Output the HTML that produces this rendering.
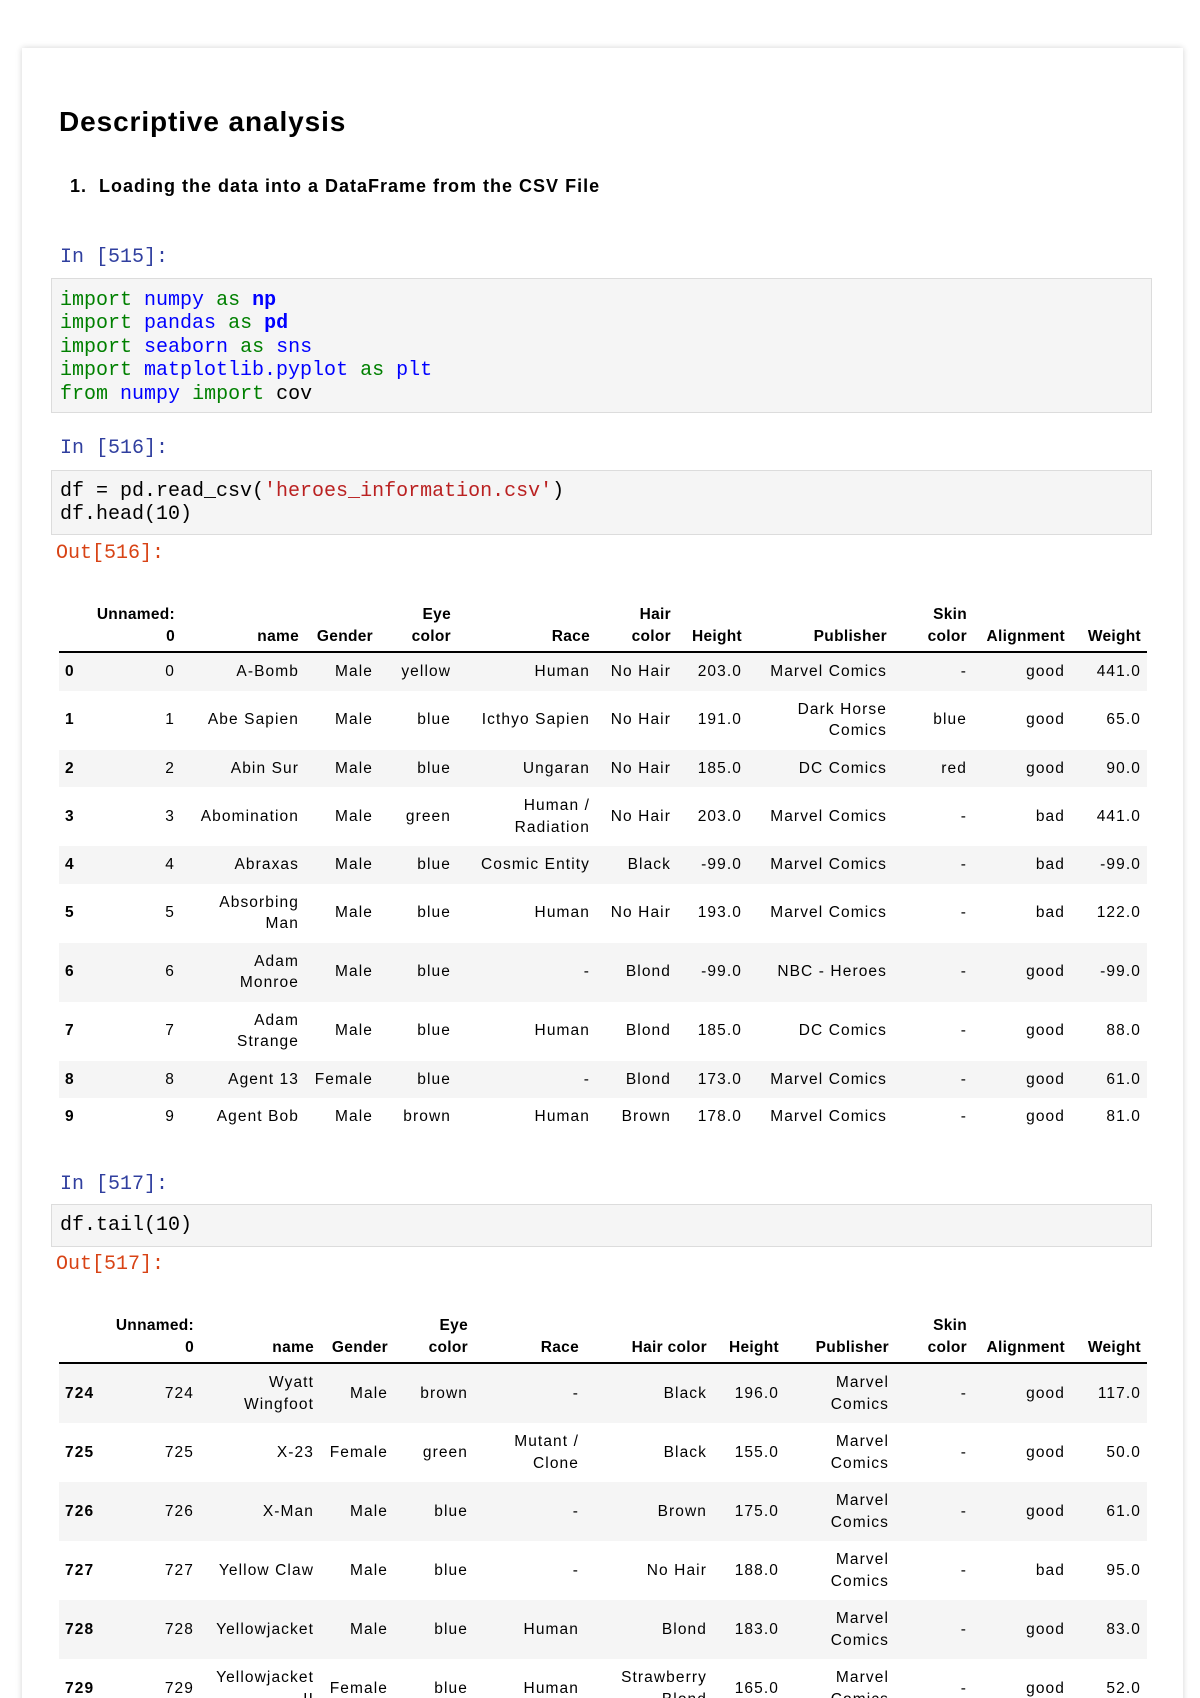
<!DOCTYPE html>
<html><head><meta charset="utf-8"><style>
html,body{margin:0;padding:0;background:#fff;width:1200px;height:1698px;overflow:hidden;}
body{position:relative;font-family:"Liberation Sans",Arial,sans-serif;color:#000;}
.card{position:absolute;left:22px;top:48px;width:1161px;height:1700px;background:#fff;box-shadow:0 0 6px rgba(0,0,0,0.18);}
.a{position:absolute;}
h1{margin:0;font-size:28px;font-weight:bold;letter-spacing:0.9px;}
.li{font-size:18px;font-weight:bold;letter-spacing:1px;}
.mono{font-family:"Liberation Mono",monospace;font-size:20px;line-height:23.4px;white-space:pre;}
.pin{color:#303f9f;}
.pout{color:#d84315;}
.box{position:absolute;left:51px;width:1101px;background:#f5f5f5;border:1px solid #dcdcdc;box-sizing:border-box;padding-left:8px;}
.k{color:#008000;}
.n{color:#0000ff;}
.b{font-weight:bold;}
.s{color:#ba2121;}
table{position:absolute;left:59px;width:1088px;border-collapse:collapse;table-layout:fixed;font-size:15.5px;line-height:21.5px;letter-spacing:1.1px;}
th,td{padding:8px 6px;text-align:right;white-space:nowrap;vertical-align:middle;overflow:visible;}
thead th{vertical-align:bottom;padding:4px 6px;border-bottom:2px solid #000;letter-spacing:0.3px;}
tbody th{text-align:left;}
tbody tr:nth-child(odd){background:#f5f5f5;}
</style></head><body>
<div class="card"></div>
<div class="a" style="left:59px;top:106px"><h1>Descriptive analysis</h1></div>
<div class="a li" style="left:70px;top:176px">1.&nbsp;&nbsp;Loading the data into a DataFrame from the CSV File</div>
<div class="a mono pin" style="left:60px;top:246px">In [515]:</div>
<div class="box mono" style="top:278px;height:135px;padding-top:10px"><span class="k">import</span> <span class="n">numpy</span> <span class="k">as</span> <span class="n b">np</span>
<span class="k">import</span> <span class="n">pandas</span> <span class="k">as</span> <span class="n b">pd</span>
<span class="k">import</span> <span class="n">seaborn</span> <span class="k">as</span> <span class="n">sns</span>
<span class="k">import</span> <span class="n">matplotlib.pyplot</span> <span class="k">as</span> <span class="n">plt</span>
<span class="k">from</span> <span class="n">numpy</span> <span class="k">import</span> cov</div>
<div class="a mono pin" style="left:60px;top:437px">In [516]:</div>
<div class="box mono" style="top:470px;height:65px;padding-top:9px">df = pd.read_csv(<span class="s">'heroes_information.csv'</span>)
df.head(10)</div>
<div class="a mono pout" style="left:56px;top:542px">Out[516]:</div>

<table style="top:600px">
<colgroup><col style="width:29px"><col style="width:93px"><col style="width:124px"><col style="width:74px"><col style="width:78px"><col style="width:139px"><col style="width:81px"><col style="width:71px"><col style="width:145px"><col style="width:80px"><col style="width:98px"><col style="width:76px"></colgroup>
<thead><tr><th></th><th>Unnamed:<br>0</th><th>name</th><th>Gender</th><th>Eye<br>color</th><th>Race</th><th>Hair<br>color</th><th>Height</th><th>Publisher</th><th>Skin<br>color</th><th>Alignment</th><th>Weight</th></tr></thead>
<tbody>
<tr><th>0</th><td>0</td><td>A-Bomb</td><td>Male</td><td>yellow</td><td>Human</td><td>No Hair</td><td>203.0</td><td>Marvel Comics</td><td>-</td><td>good</td><td>441.0</td></tr>
<tr><th>1</th><td>1</td><td>Abe Sapien</td><td>Male</td><td>blue</td><td>Icthyo Sapien</td><td>No Hair</td><td>191.0</td><td>Dark Horse<br>Comics</td><td>blue</td><td>good</td><td>65.0</td></tr>
<tr><th>2</th><td>2</td><td>Abin Sur</td><td>Male</td><td>blue</td><td>Ungaran</td><td>No Hair</td><td>185.0</td><td>DC Comics</td><td>red</td><td>good</td><td>90.0</td></tr>
<tr><th>3</th><td>3</td><td>Abomination</td><td>Male</td><td>green</td><td>Human /<br>Radiation</td><td>No Hair</td><td>203.0</td><td>Marvel Comics</td><td>-</td><td>bad</td><td>441.0</td></tr>
<tr><th>4</th><td>4</td><td>Abraxas</td><td>Male</td><td>blue</td><td>Cosmic Entity</td><td>Black</td><td>-99.0</td><td>Marvel Comics</td><td>-</td><td>bad</td><td>-99.0</td></tr>
<tr><th>5</th><td>5</td><td>Absorbing<br>Man</td><td>Male</td><td>blue</td><td>Human</td><td>No Hair</td><td>193.0</td><td>Marvel Comics</td><td>-</td><td>bad</td><td>122.0</td></tr>
<tr><th>6</th><td>6</td><td>Adam<br>Monroe</td><td>Male</td><td>blue</td><td>-</td><td>Blond</td><td>-99.0</td><td>NBC - Heroes</td><td>-</td><td>good</td><td>-99.0</td></tr>
<tr><th>7</th><td>7</td><td>Adam<br>Strange</td><td>Male</td><td>blue</td><td>Human</td><td>Blond</td><td>185.0</td><td>DC Comics</td><td>-</td><td>good</td><td>88.0</td></tr>
<tr><th>8</th><td>8</td><td>Agent 13</td><td>Female</td><td>blue</td><td>-</td><td>Blond</td><td>173.0</td><td>Marvel Comics</td><td>-</td><td>good</td><td>61.0</td></tr>
<tr><th>9</th><td>9</td><td>Agent Bob</td><td>Male</td><td>brown</td><td>Human</td><td>Brown</td><td>178.0</td><td>Marvel Comics</td><td>-</td><td>good</td><td>81.0</td></tr>
</tbody></table>

<div class="a mono pin" style="left:60px;top:1173px">In [517]:</div>
<div class="box mono" style="top:1204px;height:43px;padding-top:9px">df.tail(10)</div>
<div class="a mono pout" style="left:56px;top:1253px">Out[517]:</div>

<table style="top:1311px">
<colgroup><col style="width:45px"><col style="width:96px"><col style="width:120px"><col style="width:74px"><col style="width:80px"><col style="width:111px"><col style="width:128px"><col style="width:72px"><col style="width:110px"><col style="width:78px"><col style="width:98px"><col style="width:76px"></colgroup>
<thead><tr><th></th><th>Unnamed:<br>0</th><th>name</th><th>Gender</th><th>Eye<br>color</th><th>Race</th><th>Hair color</th><th>Height</th><th>Publisher</th><th>Skin<br>color</th><th>Alignment</th><th>Weight</th></tr></thead>
<tbody>
<tr><th>724</th><td>724</td><td>Wyatt<br>Wingfoot</td><td>Male</td><td>brown</td><td>-</td><td>Black</td><td>196.0</td><td>Marvel<br>Comics</td><td>-</td><td>good</td><td>117.0</td></tr>
<tr><th>725</th><td>725</td><td>X-23</td><td>Female</td><td>green</td><td>Mutant /<br>Clone</td><td>Black</td><td>155.0</td><td>Marvel<br>Comics</td><td>-</td><td>good</td><td>50.0</td></tr>
<tr><th>726</th><td>726</td><td>X-Man</td><td>Male</td><td>blue</td><td>-</td><td>Brown</td><td>175.0</td><td>Marvel<br>Comics</td><td>-</td><td>good</td><td>61.0</td></tr>
<tr><th>727</th><td>727</td><td>Yellow Claw</td><td>Male</td><td>blue</td><td>-</td><td>No Hair</td><td>188.0</td><td>Marvel<br>Comics</td><td>-</td><td>bad</td><td>95.0</td></tr>
<tr><th>728</th><td>728</td><td>Yellowjacket</td><td>Male</td><td>blue</td><td>Human</td><td>Blond</td><td>183.0</td><td>Marvel<br>Comics</td><td>-</td><td>good</td><td>83.0</td></tr>
<tr><th>729</th><td>729</td><td>Yellowjacket<br>II</td><td>Female</td><td>blue</td><td>Human</td><td>Strawberry<br>Blond</td><td>165.0</td><td>Marvel<br>Comics</td><td>-</td><td>good</td><td>52.0</td></tr>
</tbody></table>
</body></html>
